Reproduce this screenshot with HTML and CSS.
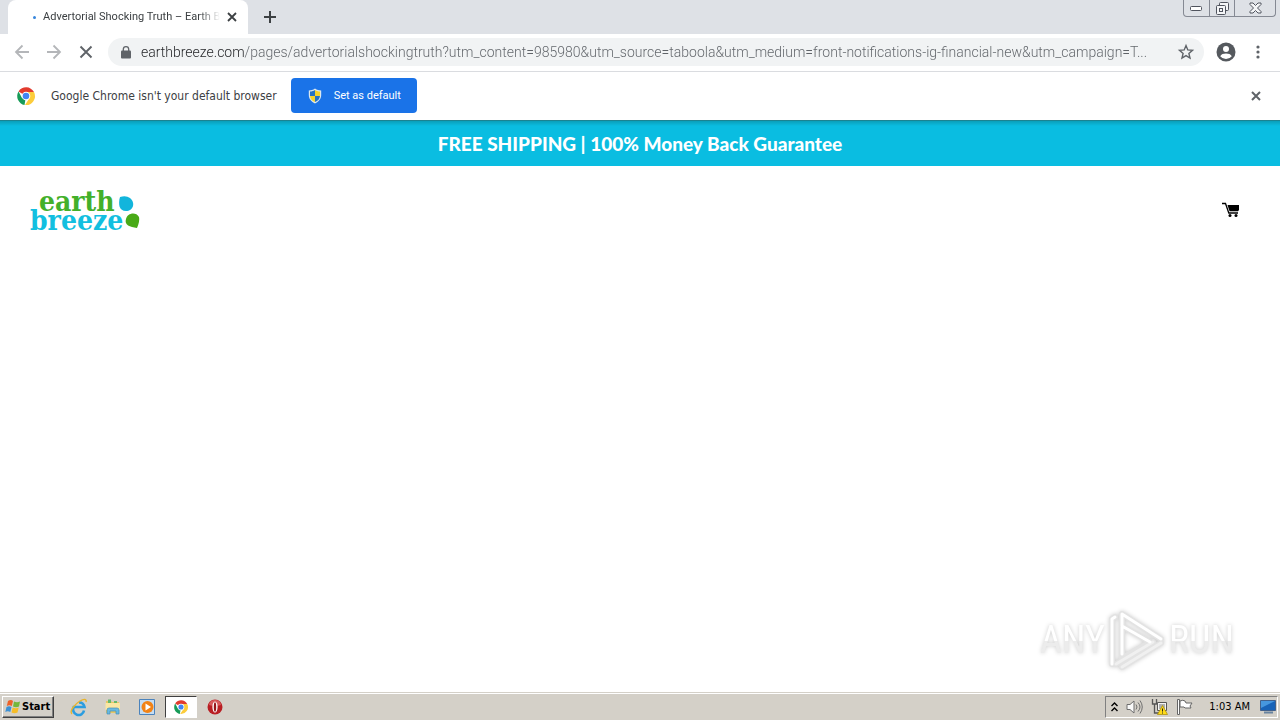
FILE: index.html
```html
<!DOCTYPE html>
<html lang="en">
<head>
<meta charset="utf-8">
<meta name="viewport" content="width=device-width, initial-scale=1">
<title>Advertorial Shocking Truth – Earth Breeze</title>
<link rel="stylesheet" href="styles.css">
</head>
<body>
<header class="tabstrip">
  <div class="tab">
    <span class="tab-spinner"></span>
    <span class="tab-title">Advertorial Shocking Truth – Earth B</span>
    <button class="icon-button tab-close" aria-label="Close tab"><svg width="10" height="10" viewBox="0 0 10 10"><path d="M1 1l8 8M9 1L1 9" stroke="#3c4043" stroke-width="1.8"/></svg></button>
  </div>
  <button class="icon-button new-tab" aria-label="New tab"><svg width="14" height="14" viewBox="0 0 14 14"><path d="M7 1v12M1 7h12" stroke="#3c4043" stroke-width="2"/></svg></button>
  <div class="window-controls">
    <button aria-label="Minimize"><svg width="13" height="5" viewBox="0 0 13 5"><rect x=".5" y=".5" width="11" height="4" rx="1" fill="#fff" stroke="#50545e"/></svg></button>
    <button aria-label="Restore"><svg width="13" height="13" viewBox="0 0 13 13" fill="#f4f5f7" stroke="#50545e"><rect x="3.500" y=".5" width="9" height="8" rx="1"/><rect x=".5" y="3.500" width="9" height="9" rx="1"/><rect x="3.500" y="6.500" width="3" height="3"/></svg></button>
    <button class="window-close" aria-label="Close window"><svg width="13" height="12" viewBox="0 0 13 12"><path d="M1 1h3l2.500 2.500L9 1h3v1.500L8.500 6l3.500 3.500V11H9L6.500 8.500 4 11H1V9.500L4.500 6 1 2.500z" fill="#f4f5f7" stroke="#50545e"/></svg></button>
  </div>
</header>
<nav class="toolbar">
  <button class="icon-button" aria-label="Back"><svg width="16" height="16" viewBox="0 0 16 16" fill="none" stroke="#b4b6b9" stroke-width="1.800"><path d="M15 8H2M8.500 1.500L2 8l6.500 6.500"/></svg></button>
  <button class="icon-button" aria-label="Forward"><svg width="16" height="16" viewBox="0 0 16 16" fill="none" stroke="#b4b6b9" stroke-width="1.800"><path d="M1 8h13M7.500 1.500L14 8l-6.500 6.500"/></svg></button>
  <button class="icon-button" aria-label="Stop loading"><svg width="14" height="14" viewBox="0 0 14 14"><path d="M1.500 1.500l11 11M12.500 1.500l-11 11" stroke="#5f6368" stroke-width="1.900"/></svg></button>
  <div class="omnibox">
    <svg width="10" height="13" viewBox="0 0 10 13"><rect y="4.500" width="10" height="8" rx="1" fill="#5f6368"/><path d="M2.300 5V3.300a2.700 2.700 0 015.400 0V5" fill="none" stroke="#5f6368" stroke-width="1.300"/></svg>
    <input class="address" type="text" aria-label="Address" value="earthbreeze.com/pages/advertorialshockingtruth?utm_content=985980&amp;utm_source=taboola&amp;utm_medium=front-notifications-ig-financial-new&amp;utm_campaign=T...">
    <button class="icon-button" aria-label="Bookmark this page"><svg width="16" height="16" viewBox="0 0 16 16"><path d="M8 1.500l1.800 4.400 4.700.4-3.600 3.100 1.100 4.700L8 11.600l-4 2.500 1.100-4.700-3.600-3.100 4.700-.4z" fill="none" stroke="#5f6368" stroke-width="1.400"/></svg></button>
  </div>
  <button class="icon-button" aria-label="Profile"><svg width="20" height="20" viewBox="0 0 20 20"><circle cx="10" cy="10" r="9.500" fill="#55595e"/><circle cx="10" cy="7" r="3" fill="#fff"/><path d="M4.200 14.200C5.200 12.200 7.500 11.500 10 11.500s4.800.7 5.800 2.700A7.300 7.300 0 0110 17a7.300 7.300 0 01-5.800-2.800z" fill="#fff"/></svg></button>
  <button class="icon-button" aria-label="Menu"><svg width="4" height="16" viewBox="0 0 4 16" fill="#5f6368"><circle cx="2" cy="3" r="1.600"/><circle cx="2" cy="8" r="1.600"/><circle cx="2" cy="13" r="1.600"/></svg></button>
</nav>
<section class="infobar">
  <svg width="18" height="18" viewBox="0 0 18 18"><use href="#chrome-logo"/></svg>
  <span class="infobar-text">Google Chrome isn't your default browser</span>
  <button class="default-button">
    <svg width="14" height="16" viewBox="0 0 14 16"><path d="M7 .5C5 2 3 2.300.8 2.500V7c0 4 2.500 6.800 6.200 8.500 3.700-1.700 6.200-4.500 6.200-8.500V2.500C11 2.300 9 2 7 .5z" fill="#dbe7ee"/><path d="M7 2C5.500 3 4 3.400 2 3.600V8h5z" fill="#2672c4"/><path d="M7 2c1.500 1 3 1.400 5 1.600V8H7zM2 8h5v6C4.200 12.700 2.200 11 2 8z" fill="#f6d32b"/><path d="M12 8H7v6c2.800-1.300 4.800-3 5-6z" fill="#2672c4"/></svg>
    Set as default
  </button>
  <button class="icon-button infobar-close" aria-label="Dismiss"><svg width="10" height="10" viewBox="0 0 10 10"><path d="M1 1l8 8M9 1L1 9" stroke="#5f6368" stroke-width="2"/></svg></button>
</section>
<main class="page">
  <div class="promo">FREE SHIPPING | 100% Money Back Guarantee</div>
  <div class="site-header">
    <a href="#" class="site-logo" aria-label="Earth Breeze home"><svg width="112" height="48" viewBox="0 0 112 48"><text class="logo-word" x="9" y="25" fill="#43b02a">earth</text><text class="logo-word" x="0" y="44" fill="#12bfe0">breeze</text><path d="M90 11q6-2 10 1c6 5 3 13-4 13-7 0-8-7-6-14z" fill="#12b5dc"/><path d="M107 42q3-7 2-11c-3-6-12-4-13 2-2 6 4 8 11 9z" fill="#49aa17"/></svg></a>
    <a href="#" class="cart" aria-label="Cart"><svg width="18" height="16" viewBox="0 0 18 16"><path d="M0 1.500h3.500l3.300 9.500H16" fill="none" stroke="#000" stroke-width="1.300"/><path d="M5.500 3H17v5l-1 1.300H7.500z"/><circle cx="8" cy="13.500" r="1.500"/><circle cx="14" cy="13.500" r="1.500"/></svg></a>
  </div>
  <div class="watermark">
    <span>ANY</span>
    <svg width="58" height="64" viewBox="0 0 58 64" fill="none" stroke-linecap="round" stroke-linejoin="round"><path d="M4 56V11l3-2M14 46V6L53 31M14 18l28 16-28 16V18M14 59l39-24M8 56l37-22" stroke="#e3e3e3" stroke-width="6"/><path d="M14 59l39-24M8 56l37-22" stroke="#f0f0f0" stroke-width="3"/><path d="M4 56V11l3-2M14 46V6L53 31M14 18l28 16" stroke="#fff" stroke-width="3"/></svg>
    <span>RUN</span>
  </div>
</main>
<footer class="taskbar">
  <button class="start"><svg width="17" height="16" viewBox="0 0 17 16"><path d="M3 2q3-2 5 0L6.800 7q-2.500-1.500-5 0z" fill="#ee6229"/><path d="M9 2.500q3 1.500 6 0L14 7.500q-3 1.500-6 0z" fill="#75b73b"/><path d="M1.500 8q2.500-1.500 5 0L5.300 13q-2.500-1.500-5 0z" fill="#3c91d5"/><path d="M7.700 8.500q3 1.500 6 0l-1.200 5q-3 1.500-6 0z" fill="#f6bd28"/></svg>Start</button>
  <div class="quick-launch">
    <button aria-label="Internet Explorer"><svg width="18" height="18" viewBox="0 0 18 18" fill="none"><path d="M14 12.500A5.500 5.500 0 113.700 9h10.800A5.500 5.500 0 009 4.500" stroke="#2b9de0" stroke-width="2.600"/><path d="M2 16C-1 13 5 6 10 3c4-2.500 7-2 6 1" stroke="#e8b42d" stroke-width="1.400"/></svg></button>
    <button aria-label="Explorer"><svg width="18" height="18" viewBox="0 0 18 18"><path d="M2 3h5l1 1h7v11H2z" fill="#e6c765"/><path d="M4 1.500h3V5H4zM10 3h3v3h-3z" fill="#65b96c"/><path d="M1.500 5H16v7H1.500z" fill="#f9e7a3"/><path d="M3 16v-4q0-2 2-2h8q2 0 2 2v4h-3v-3H6v3z" fill="#68b9e1" stroke="#4690b9" stroke-width=".7"/></svg></button>
    <button aria-label="Media Player"><svg width="18" height="18" viewBox="0 0 18 18"><path d="M1.500 1.500h15v15h-15z" fill="#c5ddf3" stroke="#4b83bc"/><circle cx="9.500" cy="9" r="6" fill="#f28316"/><path d="M7.500 5.500v7l5.500-3.500z" fill="#fff"/></svg></button>
    <button class="active-task" aria-label="Google Chrome"><svg width="14" height="14" viewBox="0 0 18 18"><g id="chrome-logo"><path d="M9 9L1.500 4.500A9 9 0 0117 5H9z" fill="#e23b2e"/><path d="M9 9L7.500 18A9 9 0 011.500 4.500L5 11z" fill="#179b58"/><path d="M9 5h8a9 9 0 01-9 13l4.500-7z" fill="#fccc3b"/><circle cx="9" cy="9" r="4.300" fill="#fff"/><circle cx="9" cy="9" r="3.300" fill="#4285f4"/></g></svg></button>
    <button aria-label="Opera"><svg width="16" height="16" viewBox="0 0 16 16"><circle cx="8" cy="8" r="7.500" fill="#b91e23"/><path d="M2 6a6 5 0 0112 0q-6 2-12 0z" fill="#d75a5c"/><ellipse cx="8" cy="8" rx="2.600" ry="5.500" fill="#fff"/><ellipse cx="8" cy="8" rx="1.200" ry="4.700" fill="#961519"/></svg></button>
  </div>
  <div class="tray">
    <button aria-label="Show hidden icons"><svg width="7" height="10" viewBox="0 0 7 10" fill="none" stroke="#000" stroke-width="1.400"><path d="M.5 4l3-3 3 3M.5 9l3-3 3 3"/></svg></button>
    <button aria-label="Volume"><svg width="17" height="16" viewBox="0 0 17 16" fill="none" stroke="#6e6e6e"><path d="M1 5.500h3L8 2v12l-4-3.500H1z" fill="#fafafa"/><path d="M10 5.500q2 2.500 0 5M12 3.500q4 4.500 0 9M14 1.500q4.500 6.500 0 13"/></svg></button>
    <button aria-label="Network"><svg width="17" height="16" viewBox="0 0 17 16"><path d="M6.500 3.500h9v8h-9z" fill="#f5f5f5" stroke="#555"/><path d="M8 5h6v5H8z" fill="#b0b0b0"/><path d="M1.500 0v5h4V0M3.500 5v9H8" fill="none" stroke="#555" stroke-width="1.300"/><path d="M11.500 6.500l5 9h-10z" fill="#ffdc18" stroke="#a88900" stroke-width=".7"/><path d="M11.500 9.500v3M11.500 13.500v1" stroke="#222"/></svg></button>
    <button aria-label="Action Center"><svg width="17" height="16" viewBox="0 0 17 16" fill="#fff" stroke="#666"><path d="M4 2q3-1.500 5 0l1 2h6l-2 3 1 2H9L8 8H4z"/><path d="M1.500.5h2v15h-2z"/></svg></button>
    <span class="clock">1:03 AM</span>
    <button aria-label="Show desktop"><svg width="16" height="14" viewBox="0 0 16 14"><path d="M.5.500h15v10H.5z" fill="#1863b8" stroke="#42618c"/><path d="M1 1h14L1 8z" fill="#4697df"/><path d="M4 12.500h9" stroke="#68839f" stroke-width="2"/></svg></button>
  </div>
</footer>
</body>
</html>
```
FILE: styles.css
```css
* { box-sizing: border-box; }
body {
  margin: 0;
  min-height: 100vh;
  display: flex;
  flex-direction: column;
  background: #fff;
  color: #3c4043;
  font-family: Roboto, "Noto Sans", sans-serif;
}
button { margin: 0; padding: 0; border: 0; background: none; color: inherit; font: inherit; }
svg { display: block; flex: none; overflow: visible; }
.icon-button { display: grid; place-items: center; width: 24px; height: 24px; flex: none; }

.tabstrip { display: flex; height: 34px; padding-left: 8px; background: #dee1e6; }
.tab {
  display: flex;
  align-items: center;
  width: 240px;
  padding: 0 4px 0 25px;
  border-radius: 8px 8px 0 0;
  background: #fff;
}
.tab-spinner { width: 3px; height: 3px; margin-right: 7px; border-radius: 50%; background: #3685dc; flex: none; }
.tab-title {
  flex: 1;
  white-space: nowrap;
  font-size: 11px;
  line-height: 16px;
  mask-image: linear-gradient(90deg, #000 88%, transparent);
}
.new-tab { margin: 5px 0 0 10px; }
.window-controls {
  display: flex;
  height: 17px;
  margin: 0 4px 0 auto;
  border: 1px solid #858993;
  border-top: 0;
  border-radius: 0 0 4px 4px;
}
.window-controls button { display: grid; place-items: center; width: 25px; }
.window-controls button + button { border-left: 1px solid #858993; }
.window-controls .window-close { width: 41px; }

.toolbar {
  display: flex;
  align-items: center;
  gap: 8px;
  height: 38px;
  padding: 0 10px 1px;
  border-bottom: 1px solid #dadce0;
}
.omnibox {
  display: flex;
  flex: 1;
  align-items: center;
  height: 28px;
  margin: 0 2px;
  padding: 0 6px 0 13px;
  border-radius: 14px;
  background: #f1f3f4;
  min-width: 0;
}
.address {
  flex: 1;
  min-width: 0;
  margin: 0 8px 0 10px;
  padding: 0;
  border: 0;
  background: linear-gradient(90deg, #202124 104px, #5f6368 104px) text;
  color: transparent;
  font: 300 14px/20px Roboto, sans-serif;
}

.infobar { display: flex; align-items: center; height: 49px; padding: 0 12px 1px 17px; border-bottom: 1px solid #1b8391; }
.infobar-text { margin: 0 14px 0 16px; font: 12px/16px "DejaVu Sans Condensed", sans-serif; }
.default-button {
  display: flex;
  align-items: center;
  gap: 12px;
  height: 35px;
  padding: 0 16px 0 17px;
  border-radius: 4px;
  background: #1a73e8;
  color: #fff;
  font-size: 11px;
}
.infobar-close { margin-left: auto; }

.page { position: relative; flex: 1; }
.promo {
  padding: 11px 16px 10px;
  background: linear-gradient(#0a9fba, #0abde1 5px);
  color: #fff;
  text-align: center;
  font: 900 19px/24px Lato, sans-serif;
}
.site-header { display: flex; justify-content: space-between; align-items: center; padding: 20px 40px 20px 30px; }
.logo-word { font: 700 28px "DejaVu Serif Condensed", "DejaVu Serif", serif; }
.watermark {
  position: absolute;
  right: 46px;
  bottom: 20px;
  display: flex;
  align-items: center;
  gap: 3px;
  font: 38px/64px "Roboto Condensed", "Liberation Sans Narrow", sans-serif;
  filter: drop-shadow(0 0 2px #ccc);
}
.watermark span { background: linear-gradient(#fff 52%, #ececec 52%) text; color: transparent; }

.taskbar {
  display: flex;
  align-items: center;
  height: 28px;
  padding: 2px;
  border-top: 1px solid #d4d0c8;
  box-shadow: inset 0 1px #fff;
  background: #d4d0c8;
  color: #000;
}
.start {
  display: flex;
  align-items: center;
  height: 22px;
  padding: 0 3px 0 2px;
  border: 1px solid;
  border-color: #fff #404040 #404040 #fff;
  box-shadow: inset -1px -1px #808080;
  font: 700 11px "DejaVu Sans Condensed", sans-serif;
}
.quick-launch { display: flex; margin-left: 8px; }
.quick-launch button { display: grid; place-items: center; width: 34px; height: 22px; }
.quick-launch .active-task {
  width: 32px;
  margin: 0 1px;
  border: 1px solid;
  border-color: #404040 #fff #fff #404040;
  background: #fff;
}
.tray {
  display: flex;
  align-items: center;
  gap: 8px;
  height: 22px;
  margin-left: auto;
  padding: 0 1px 0 5px;
  border: 1px solid;
  border-color: #808080 #fff #fff #808080;
}
.clock { margin: 0 2px 0 8px; font: 11px/16px "DejaVu Sans Condensed", sans-serif; }
```
